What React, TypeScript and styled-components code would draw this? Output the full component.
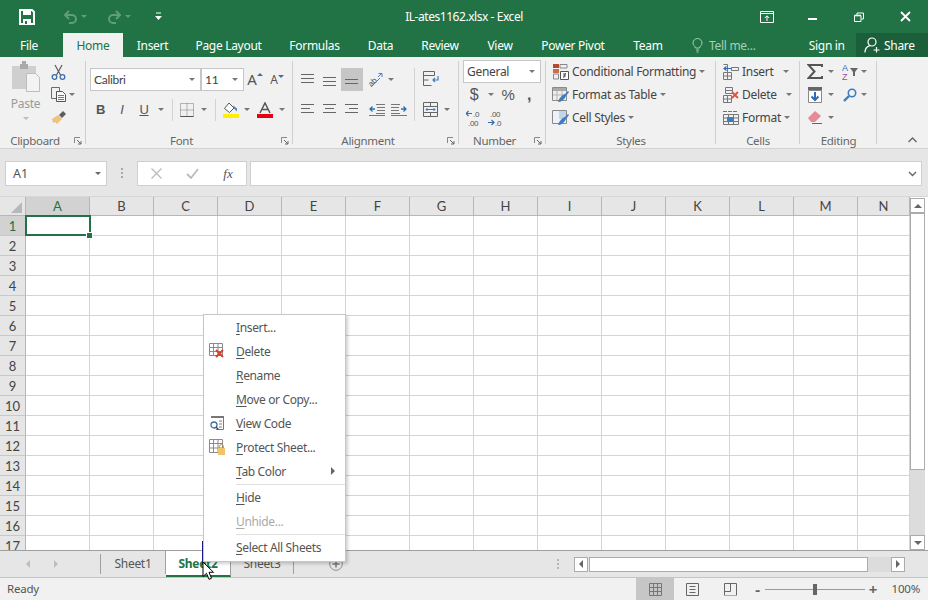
import React from "react";
import styled, { createGlobalStyle } from "styled-components";

const GREEN = "#217346";
const UI_FONT = `"Noto Sans", "Open Sans", sans-serif`;
const SHEET_FONT = `Lato, "Liberation Sans", sans-serif`;

const Global = createGlobalStyle`
  html, body { margin: 0; padding: 0; background: #fff; }
  * { box-sizing: border-box; }
  body { font-family: ${UI_FONT}; font-size: 12px; color: #444; overflow: hidden; }
`;

/* ---------- icons ---------- */
type IconProps = { w?: number; h?: number; children: React.ReactNode };
const Svg: React.FC<IconProps> = ({ w = 16, h = 16, children }) => (
  <svg width={w} height={h} viewBox={`0 0 ${w} ${h}`} fill="none" style={{ display: "block" }}>
    {children}
  </svg>
);

const SaveIcon = () => (
  <Svg w={16} h={16}>
    <path d="M1 1h12l2 2v12H1z" stroke="#fff" strokeWidth="2" />
    <path d="M4 1h8v5H4z" fill="#fff" />
    <path d="M4 10h8v5H4z" fill="#fff" />
    <path d="M6 12h2v3H6z" fill={GREEN} />
  </Svg>
);
const UndoIcon = ({ flip }: { flip?: boolean }) => (
  <svg width="15" height="14" viewBox="0 0 15 14" fill="none" style={{ display: "block", transform: flip ? "scaleX(-1)" : undefined }}>
    <path d="M6 1L2 5l4 4" stroke="#5f9d7c" strokeWidth="2" />
    <path d="M2 5h7a4 4 0 0 1 0 8H6" stroke="#5f9d7c" strokeWidth="2" />
  </svg>
);
const CustomizeIcon = () => (
  <Svg w={7} h={9}>
    <path d="M1 1h5" stroke="#fff" />
    <path d="M0 4h7L3.500 8z" fill="#fff" />
  </Svg>
);
const RibbonDisplayIcon = () => (
  <Svg w={14} h={12}>
    <path d="M.5 .5h13v11H.5z" stroke="#fff" />
    <path d="M1 2.500h12" stroke="#fff" />
    <path d="M7 10V5M4.800 7L7 4.800 9.200 7" stroke="#fff" />
  </Svg>
);
const MinimizeIcon = () => (
  <Svg w={10} h={10}>
    <path d="M0 7h9" stroke="#fff" strokeWidth="2" />
  </Svg>
);
const RestoreIcon = () => (
  <Svg w={10} h={10}>
    <path d="M.5 3.500h6.500v6H.5zM3 3V1h6.500v6H7.500" stroke="#fff" />
    <path d="M.5 3.500H7" stroke="#fff" strokeWidth="1.600" />
  </Svg>
);
const CloseIcon = () => (
  <Svg w={11} h={11}>
    <path d="M1 1l9 9M10 1l-9 9" stroke="#fff" strokeWidth="1.800" />
  </Svg>
);
const BulbIcon = () => (
  <Svg w={11} h={15}>
    <path d="M3.500 10C3 8 1 7.200 1 5a4.500 4.500 0 0 1 9 0c0 2.200-2 3-2.500 5z" stroke="#a5d0b7" />
    <path d="M4 12h3M4.500 14h2" stroke="#a5d0b7" />
  </Svg>
);
const PersonIcon = () => (
  <Svg w={16} h={16}>
    <circle cx="8" cy="5" r="4" stroke="#fff" strokeWidth="1.200" />
    <path d="M1 15.500c0-3.500 2-6 5-6.800M9.500 13h6M12.500 10v5.500" stroke="#fff" strokeWidth="1.200" />
  </Svg>
);
const PasteIcon = () => (
  <Svg w={30} h={32}>
    <path d="M1 5h24v23H1z" fill="#cfcfcf" />
    <path d="M9 3h8v5H9z" fill="#a9a9a9" />
    <path d="M11 0h4v3h-4z" fill="#a9a9a9" />
    <path d="M15.500 12.500h9l4 4v14h-13z" fill="#f3f3f3" stroke="#bdbdbd" />
  </Svg>
);
const ScissorsIcon = () => (
  <Svg w={15} h={16}>
    <path d="M4 1l5.500 10M11 1L5.500 11" stroke="#5c5c5c" strokeWidth="1.200" />
    <circle cx="3.500" cy="13" r="2.300" stroke="#3f6fa8" strokeWidth="1.300" />
    <circle cx="11.500" cy="13" r="2.300" stroke="#3f6fa8" strokeWidth="1.300" />
  </Svg>
);
const CopyIcon = () => (
  <Svg w={15} h={15}>
    <path d="M.5 .5h8v11h-8z" fill="#f1f1f1" stroke="#6a6a6a" />
    <path d="M5.500 4.500h6l3 3v7h-9z" fill="#f9f9f9" stroke="#555" />
    <path d="M7 8.500h6M7 10.500h6M7 12.500h6" stroke="#777" />
  </Svg>
);
const PainterIcon = () => (
  <Svg w={16} h={15}>
    <path d="M1 9l6-4 4 4-5 5-2-2-2 1z" fill="#efc27d" />
    <path d="M8 5l4-4 3 3-4 4z" fill="#5e5e5e" />
  </Svg>
);
const BorderIcon = () => (
  <Svg w={14} h={14}>
    <path d="M.5 .5h13v13H.5zM7 .5v13M.5 7h13" stroke="#777" strokeDasharray="1 1" />
    <path d="M.5 13.500h13" stroke="#555" />
  </Svg>
);
const FillIcon = () => (
  <Svg w={16} h={16}>
    <path d="M6 1L1.500 6.500 6.500 10.500 11 6z" stroke="#555" fill="#fff" />
    <path d="M10 3.500l4 3v3l-3-3z" fill="#4e7fb5" />
    <path d="M0 12h16v4H0z" fill="#ffee00" />
  </Svg>
);
const FontColorIcon = () => (
  <Svg w={16} h={16}>
    <path d="M3 11L8 1l5 10M5 7.500h6" stroke="#555" strokeWidth="1.500" />
    <path d="M0 12h16v4H0z" fill="#e8000d" />
  </Svg>
);
const AlignLines = ({ y = 0, widths = [13, 13, 13], x = [0, 0, 0] }: { y?: number; widths?: number[]; x?: number[] }) => (
  <Svg w={14} h={14}>
    {widths.map((wd, i) => (
      <path key={i} d={`M${x[i]} ${y + 1.5 + i * 4}h${wd}`} stroke="#666" />
    ))}
  </Svg>
);
const OrientIcon = () => (
  <svg width="18" height="18" viewBox="0 0 18 18" fill="none" style={{ display: "block" }}>
    <text x="2" y="14" fontSize="8" fill="#555" fontFamily="Liberation Sans" transform="rotate(-45 6 11)">ab</text>
    <path d="M5 16L14 7" stroke="#777" />
    <path d="M12 6l3-3M12.500 2.500H16V6" stroke="#4e7fb5" />
  </svg>
);
const IndentIcon = ({ flip }: { flip?: boolean }) => (
  <svg width="16" height="13" viewBox="0 0 16 13" fill="none" style={{ display: "block", transform: flip ? "scaleX(-1)" : undefined }}>
    <path d="M7 1.500h9M8 4.500h8M8 7.500h8M7 10.500h9M0 12.500h16" stroke="#777" />
    <path d="M1 6h5M3.500 3.500L1 6l2.500 2.500" stroke="#2f6db0" strokeWidth="1.300" />
  </svg>
);
const WrapIcon = () => (
  <Svg w={16} h={15}>
    <path d="M.5 .5h11v4h-11zM.5 4.500h9M.5 9h5M.5 4.500v10h8" stroke="#666" />
    <path d="M15 5v4H10M12 7l-2 2 2 2" stroke="#3f7cbf" strokeWidth="1.200" />
  </Svg>
);
const MergeIcon = () => (
  <Svg w={15} h={15}>
    <path d="M.5 .5h14v14H.5zM.5 4.500h14M.5 10.500h14M7.500 .5v4M7.500 10.500v4" stroke="#666" />
    <path d="M3 7.500h9M4.500 6L3 7.500 4.500 9M10.500 6L12 7.500 10.500 9" stroke="#3f7cbf" />
  </Svg>
);
const DecIcon = ({ more }: { more?: boolean }) => (
  <Svg w={16} h={16}>
    <path d={more ? "M0 12.500h6M3.500 10l2.500 2.500L3.500 15" : "M0 3.500h6M2.500 1L0 3.500 2.500 6"} stroke="#2f6db0" strokeWidth="1.200" />
    <text x={more ? 2 : 7} y="7" fontSize="8" fill="#555" fontFamily="Liberation Sans">{more ? ".00" : ".0"}</text>
    <text x={more ? 7 : 2} y="15.500" fontSize="8" fill="#555" fontFamily="Liberation Sans">{more ? ".0" : ".00"}</text>
  </Svg>
);
const CondIcon = () => (
  <Svg w={16} h={16}>
    <path d="M0 0h6v4H0z" fill="#b5492f" />
    <path d="M7 .5h7v3.500H7z" stroke="#888" />
    <path d="M0 5h6v4H0z" fill="#c96d4f" />
    <path d="M.5 10h5v5h-5z" stroke="#888" />
    <path d="M7.500 7.500h8v8h-8z" fill="#fff" stroke="#555" />
    <path d="M10 10h3M10 12h3M12.500 9l-2 5" stroke="#333" strokeWidth=".8" />
  </Svg>
);
const TableIcon = () => (
  <Svg w={17} h={16}>
    <path d="M.5 .5h14v13H.5z" fill="#eee" stroke="#8a8a8a" />
    <path d="M1 1h13v3H1z" fill="#a9a9a9" />
    <path d="M5 4v9M10 4v9M1 8h13" stroke="#b5b5b5" />
    <path d="M6 15c1-4 4-7 7-8l3-3 1 1-3 4c-2 4-5 6-8 6z" fill="#3f7cbf" />
  </Svg>
);
const CellStyleIcon = () => (
  <Svg w={17} h={16}>
    <path d="M.5 .5h14v13H.5z" fill="#eef2f6" stroke="#8a8a8a" />
    <path d="M7 1h7v8H7z" fill="#c4d5e6" />
    <path d="M6 15c1-4 4-7 7-8l3-3 1 1-3 4c-2 4-5 6-8 6z" fill="#3f7cbf" />
  </Svg>
);
const InsertCellsIcon = () => (
  <Svg w={16} h={16}>
    <path d="M.5 8.500h8v7h-8zM4.500 8.500v7M.5 12h8M.5 .5h4v8M8.500 3.500h7v3h-7z" stroke="#777" />
    <path d="M1 4.500h7M3.500 2.500L1 4.500l2.500 2" stroke="#2f6db0" strokeWidth="1.200" />
  </Svg>
);
const DeleteCellsIcon = () => (
  <Svg w={16} h={16}>
    <path d="M.5 8.500h8v7h-8zM4.500 8.500v7M.5 12h8M2.500 .5h7v3h-7zM2.500 3.500h7v3h-7z" stroke="#777" />
    <path d="M9 5l6 6M15 5l-6 6" stroke="#d8553e" strokeWidth="1.800" />
  </Svg>
);
const FormatCellsIcon = () => (
  <Svg w={16} h={16}>
    <path d="M.5 4.500h15v10H.5zM5.500 4.500v10M10.500 4.500v10M.5 8h15M.5 11.500h15" stroke="#777" />
    <path d="M0 1.500h15" stroke="#3f7cbf" strokeDasharray="4 1" />
    <path d="M4 7h6v5H4z" fill="#3f7cbf" />
  </Svg>
);
const SigmaIcon = () => (
  <Svg w={16} h={15}>
    <path d="M15 3V1H1.500l6 6.500-6 6.500H15v-2" stroke="#555" strokeWidth="2" />
  </Svg>
);
const FillDownIcon = () => (
  <Svg w={14} h={16}>
    <path d="M0 0h14v3H0z" fill="#666" />
    <path d="M.5 3.500h13v12H.5z" stroke="#888" fill="#fff" />
    <path d="M7 5v8M3.500 9.500L7 13l3.500-3.500" stroke="#2f6db0" strokeWidth="2" />
  </Svg>
);
const SortIcon = () => (
  <Svg w={16} h={17}>
    <text x="0" y="8" fontSize="9" fill="#2f6db0" fontFamily="Liberation Sans">A</text>
    <text x="0" y="16.500" fontSize="9" fill="#a04ea8" fontFamily="Liberation Sans">Z</text>
    <path d="M8 5h8l-3 4v4h-2V9z" fill="#666" />
  </Svg>
);
const FindIcon = () => (
  <Svg w={14} h={14}>
    <circle cx="9" cy="5" r="3.700" stroke="#3f7cbf" strokeWidth="1.600" />
    <path d="M6 8l-5 5" stroke="#3f7cbf" strokeWidth="2.400" />
  </Svg>
);
const EraserIcon = () => (
  <Svg w={15} h={13}>
    <path d="M0 7l7-7 6 5-6 6H3z" fill="#e58a96" />
    <path d="M4 12.500h10" stroke="#666" />
  </Svg>
);
const LauncherIcon = () => (
  <Svg w={8} h={8}>
    <path d="M.5 6V.5H6" stroke="#888" />
    <path d="M3 3l4 4M7 4v3H4" stroke="#666" />
  </Svg>
);
const CollapseIcon = () => (
  <Svg w={9} h={6}>
    <path d="M.5 5l4-4 4 4" stroke="#666" strokeWidth="1.400" />
  </Svg>
);
const CrossIcon = () => (
  <Svg w={11} h={11}>
    <path d="M.5 .5l10 10M10.500 .5l-10 10" stroke="#bbb" strokeWidth="1.300" />
  </Svg>
);
const CheckIcon = () => (
  <Svg w={13} h={11}>
    <path d="M1 6l4 4 7-9" stroke="#bbb" strokeWidth="1.800" />
  </Svg>
);
const ChevronIcon = () => (
  <Svg w={9} h={6}>
    <path d="M1 1l3.500 3.500L8 1" stroke="#666" strokeWidth="1.400" />
  </Svg>
);
const ViewCodeIcon = () => (
  <Svg w={16} h={16}>
    <path d="M2.500 1.500h12v13H7" stroke="#777" />
    <path d="M2 1h13v2H2z" fill="#777" />
    <circle cx="5" cy="10" r="3" stroke="#3f6f9f" strokeWidth="1.300" />
    <path d="M7 12l2.500 2.500" stroke="#444" strokeWidth="1.300" />
    <path d="M10 6h3M10 9h3M10 12h3" stroke="#777" />
  </Svg>
);
const ProtectIcon = () => (
  <Svg w={16} h={16}>
    <path d="M.5 .5h13v13H.5zM.5 4.500h13M.5 9h13M4.500 .5v13M9 .5v13" stroke="#8a8a8a" />
    <path d="M9 9h7v7H9z" fill="#f0c36d" />
    <path d="M10.500 9V7.500a2 2 0 0 1 4 0V9" stroke="#c89b3c" />
  </Svg>
);
const DeleteSheetIcon = () => (
  <Svg w={16} h={16}>
    <path d="M.5 .5h13v12H.5zM.5 4.500h13M.5 8.500h13M4.500 .5v12M9 .5v12" stroke="#8a8a8a" />
    <path d="M7 7l7 7M14 7l-7 7" stroke="#d8412a" strokeWidth="2" />
  </Svg>
);
const NormalViewIcon = () => (
  <Svg w={13} h={13}>
    <path d="M.5 .5h12v12H.5zM4.500 .5v12M8.500 .5v12M.5 4.500h12M.5 8.500h12" stroke="#777" />
  </Svg>
);
const PageLayoutIcon = () => (
  <Svg w={13} h={13}>
    <path d="M.5 .5h12v12H.5z" stroke="#666" />
    <path d="M3.500 3.500h6M3.500 6.500h6M3.500 9.500h6" stroke="#666" />
  </Svg>
);
const PageBreakIcon = () => (
  <Svg w={13} h={13}>
    <path d="M.5 .5h12v12M.5 .5v12M.5 8.500h6v-8" stroke="#666" />
    <path d="M.5 12.500h12" stroke="#aaa" />
  </Svg>
);
const PlusCircleIcon = () => (
  <Svg w={14} h={14}>
    <circle cx="7" cy="7" r="6.300" stroke="#8a8a8a" />
    <path d="M3.500 7h7M7 3.500v7" stroke="#777" strokeWidth="1.500" />
  </Svg>
);
const PointerIcon = () => (
  <Svg w={14} h={20}>
    <path d="M1 1v14.500l3.500-3.200 2.500 6 2.500-1-2.500-6h4.500z" fill="#fff" stroke="#000" />
  </Svg>
);

/* ---------- shared bits ---------- */
const Caret = styled.span<{ $color?: string }>`
  display: block;
  width: 0;
  height: 0;
  border-left: 3px solid transparent;
  border-right: 3px solid transparent;
  border-top: 3px solid ${(p) => p.$color || "#777"};
`;
const Slot = styled.div<{ $w: number; $h?: number; $active?: boolean }>`
  width: ${(p) => p.$w}px;
  height: ${(p) => p.$h || 23}px;
  flex: none;
  display: flex;
  align-items: center;
  justify-content: center;
  background: ${(p) => (p.$active ? "#c6c6c6" : "transparent")};
`;

/* ---------- title bar ---------- */
const TitleBar = styled.header`
  height: 33px;
  background: ${GREEN};
  display: grid;
  grid-template-columns: 1fr auto 1fr;
  align-items: center;
  color: #fff;
`;
const Qat = styled.div`
  display: flex;
  align-items: center;
  padding-left: 19px;
  height: 30px;
`;
const Title = styled.div`
  font-size: 12px;
  letter-spacing: -0.45px;
`;
const WindowControls = styled.div`
  display: flex;
  justify-content: flex-end;
  height: 30px;
`;

/* ---------- tabs ---------- */
const TabRow = styled.nav`
  height: 24px;
  background: ${GREEN};
  display: flex;
  color: #fff;
  font-size: 12px;
  letter-spacing: -0.3px;
`;
const Tab = styled.div<{ $w: number; $active?: boolean }>`
  width: ${(p) => p.$w}px;
  flex: none;
  display: flex;
  align-items: center;
  justify-content: center;
  background: ${(p) => (p.$active ? "#f1f1f1" : "transparent")};
  color: ${(p) => (p.$active ? GREEN : "#fff")};
`;
const TellMe = styled.div`
  width: 116px;
  margin-left: 15px;
  display: flex;
  align-items: center;
  gap: 6px;
  color: #a5d0b7;
`;
const SignIn = styled.div`
  margin-left: auto;
  width: 46px;
  display: flex;
  align-items: center;
  justify-content: center;
  margin-right: 7px;
`;
const Share = styled.div`
  width: 74px;
  background: #1b5e3a;
  display: flex;
  align-items: center;
  padding-left: 8px;
  gap: 4px;
`;

/* ---------- ribbon ---------- */
const Ribbon = styled.section`
  height: 92px;
  background: #f1f1f1;
  border-bottom: 1px solid #d2d2d2;
  display: flex;
  font-size: 12px;
  letter-spacing: -0.3px;
`;
const Group = styled.div<{ $w: number }>`
  width: ${(p) => p.$w}px;
  flex: none;
  position: relative;
  display: flex;
  flex-direction: column;
  &::after {
    content: "";
    position: absolute;
    right: 0;
    top: 4px;
    bottom: 4px;
    width: 1px;
    background: #cfcfcf;
  }
`;
const GroupBody = styled.div<{ $top?: number; $left?: number; $gap?: number; $row?: boolean }>`
  height: 75px;
  flex: none;
  padding-top: ${(p) => p.$top ?? 3}px;
  padding-left: ${(p) => p.$left ?? 0}px;
  display: flex;
  flex-direction: ${(p) => (p.$row ? "row" : "column")};
  gap: ${(p) => p.$gap ?? 0}px;
`;
const GroupLabel = styled.div`
  height: 16px;
  display: flex;
  align-items: center;
  color: #666;
  font-size: 11.500px;
  padding-top: 1px;
`;
const LabelText = styled.div`
  flex: 1;
  text-align: center;
`;
const Launcher = styled.div`
  width: 16px;
  display: flex;
  justify-content: center;
  padding-right: 1px;
`;
const Row = styled.div<{ $h?: number }>`
  display: flex;
  align-items: center;
  height: ${(p) => p.$h || 23}px;
`;
const Column = styled.div<{ $w?: number }>`
  display: flex;
  flex-direction: column;
  ${(p) => (p.$w ? `width: ${p.$w}px;` : "")}
`;
const PasteButton = styled.div`
  width: 47px;
  margin-left: 2px;
  display: flex;
  flex-direction: column;
  align-items: center;
  padding-top: 1px;
  color: #9a9a9a;
`;
const PasteLabel = styled.div`
  margin-top: 3px;
  line-height: 16px;
`;
const PasteCaret = styled.div`
  margin-top: 5px;
`;
const Select = styled.div<{ $w: number; $h?: number; $font?: string }>`
  width: ${(p) => p.$w}px;
  height: ${(p) => p.$h || 23}px;
  flex: none;
  background: #fff;
  border: 1px solid #c6c6c6;
  display: flex;
  align-items: center;
  justify-content: space-between;
  padding: 0 5px 0 3px;
  font-family: ${(p) => p.$font || UI_FONT};
  color: #444;
`;
const StyleLetter = styled.span<{ $b?: boolean; $i?: boolean; $u?: boolean }>`
  font-family: "Liberation Sans", sans-serif;
  font-size: 13px;
  font-weight: ${(p) => (p.$b ? 700 : 400)};
  font-style: ${(p) => (p.$i ? "italic" : "normal")};
  text-decoration: ${(p) => (p.$u ? "underline" : "none")};
  color: #555;
`;
const GrowA = styled.span<{ $size: number }>`
  display: flex;
  align-items: flex-start;
  font-size: ${(p) => p.$size}px;
  line-height: 1;
  color: #555;
`;
const Arrow = styled.span<{ $down?: boolean }>`
  display: block;
  width: 0;
  height: 0;
  margin-top: 1px;
  border-left: 3px solid transparent;
  border-right: 3px solid transparent;
  border-bottom: ${(p) => (p.$down ? "0" : "3px solid #3f6f9f")};
  border-top: ${(p) => (p.$down ? "3px solid #3f6f9f" : "0")};
`;
const VSep = styled.div<{ $l: number; $r: number; $h?: number }>`
  width: 1px;
  height: ${(p) => p.$h || 22}px;
  flex: none;
  margin: 0 ${(p) => p.$r}px 0 ${(p) => p.$l}px;
  background: #d2d2d2;
`;
const NumberGlyph = styled.span<{ $size: number; $b?: boolean }>`
  font-size: ${(p) => p.$size}px;
  font-weight: ${(p) => (p.$b ? 700 : 400)};
  color: #555;
  font-family: "Liberation Sans", sans-serif;
`;
const StyleRow = styled.div<{ $w: number }>`
  height: 23px;
  width: ${(p) => p.$w}px;
  display: flex;
  align-items: center;
  gap: 3px;
`;
const IconBox = styled.div`
  width: 17px;
  flex: none;
  display: flex;
  justify-content: center;
`;
const RowCaret = styled.div<{ $gap: number }>`
  margin-left: ${(p) => p.$gap}px;
`;
const CollapseArea = styled.div`
  flex: 1;
  display: flex;
  align-items: flex-end;
  justify-content: flex-end;
  padding: 0 11px 5px 0;
`;

/* ---------- formula bar ---------- */
const FormulaBar = styled.section`
  height: 48px;
  background: #e6e6e6;
  display: flex;
  align-items: flex-start;
  padding: 12px 6px 0 5px;
  border-bottom: 1px solid #d6d6d6;
`;
const NameBox = styled.div`
  width: 102px;
  height: 25px;
  background: #fff;
  border: 1px solid #cfcfcf;
  display: flex;
  align-items: center;
  justify-content: space-between;
  padding: 0 5px 0 7px;
  font-size: 12.500px;
  color: #555;
`;
const GripDots = styled.div`
  width: 30px;
  height: 25px;
  display: flex;
  align-items: center;
  justify-content: center;
`;
const Grip = styled.div`
  width: 2px;
  height: 11px;
  background: repeating-linear-gradient(#a8a8a8 0 2px, transparent 2px 4px);
`;
const FxBox = styled.div`
  width: 110px;
  height: 25px;
  background: #fff;
  border: 1px solid #cfcfcf;
  display: grid;
  grid-template-columns: 36px 36px 36px;
  align-items: center;
  justify-items: center;
`;
const FxText = styled.span`
  font-family: "Liberation Serif", serif;
  font-style: italic;
  font-size: 13px;
  color: #555;
`;
const FormulaInput = styled.div`
  flex: 1;
  height: 25px;
  margin-left: 3px;
  background: #fff;
  border: 1px solid #cfcfcf;
  display: flex;
  align-items: center;
  justify-content: flex-end;
  padding-right: 4px;
`;

/* ---------- sheet ---------- */
const SheetArea = styled.section`
  height: 353px;
  display: flex;
  overflow: hidden;
  background: #fff;
`;
const Grid = styled.div`
  flex: 1;
  min-width: 0;
  overflow: hidden;
  font-family: ${SHEET_FONT};
  font-size: 13px;
`;
const HeaderRow = styled.div`
  display: flex;
  height: 19px;
`;
const Corner = styled.div`
  width: 26px;
  flex: none;
  background: #e6e6e6;
  border-right: 1px solid #b6b6b6;
  border-bottom: 1px solid #b6b6b6;
  display: flex;
  justify-content: flex-end;
  align-items: flex-end;
  padding: 0 3px 2px 0;
`;
const CornerTriangle = styled.div`
  width: 0;
  height: 0;
  border-left: 11px solid transparent;
  border-bottom: 11px solid #b8b8b8;
`;
const ColHead = styled.div<{ $w: number; $sel?: boolean }>`
  width: ${(p) => p.$w}px;
  flex: none;
  display: flex;
  align-items: center;
  justify-content: center;
  background: ${(p) => (p.$sel ? "#d2d2d2" : "#e6e6e6")};
  color: ${(p) => (p.$sel ? GREEN : "#444")};
  border-right: 1px solid #b6b6b6;
  border-bottom: 1px solid ${(p) => (p.$sel ? GREEN : "#b6b6b6")};
`;
const DataRow = styled.div`
  display: flex;
  height: 20px;
`;
const RowHead = styled.div<{ $sel?: boolean }>`
  width: 26px;
  flex: none;
  display: flex;
  align-items: center;
  justify-content: center;
  background: ${(p) => (p.$sel ? "#d2d2d2" : "#e6e6e6")};
  color: ${(p) => (p.$sel ? GREEN : "#444")};
  border-right: 1px solid #b6b6b6;
  border-bottom: 1px solid #c8c8c8;
`;
const Cell = styled.div<{ $w: number; $active?: boolean }>`
  width: ${(p) => p.$w}px;
  flex: none;
  position: relative;
  border-right: 1px solid #d4d4d4;
  border-bottom: 1px solid #d4d4d4;
  ${(p) =>
    p.$active &&
    `
    &::after {
      content: "";
      box-sizing: border-box;
      position: absolute;
      left: -1px;
      top: -1px;
      width: 66px;
      height: 21px;
      border: 2px solid ${GREEN};
    }
    &::before {
      content: "";
      position: absolute;
      z-index: 1;
      left: 60px;
      top: 16px;
      width: 5px;
      height: 5px;
      background: ${GREEN};
      border: 1px solid #fff;
      box-sizing: content-box;
    }
  `}
`;
const VScroll = styled.div`
  width: 18px;
  flex: none;
  background: #fff;
  padding: 1px 3px 0 0;
  display: flex;
  flex-direction: column;
`;
const ScrollButton = styled.div`
  width: 15px;
  height: 15px;
  flex: none;
  background: #fff;
  border: 1px solid #ababab;
  display: flex;
  align-items: center;
  justify-content: center;
`;
const ArrowUp = styled.span`
  display: block;
  width: 0;
  height: 0;
  border-left: 4px solid transparent;
  border-right: 4px solid transparent;
  border-bottom: 4px solid #666;
`;
const ArrowDown = styled(ArrowUp)`
  border-bottom: 0;
  border-top: 4px solid #666;
`;
const VTrack = styled.div`
  flex: 1;
  background: #dcdcdc;
`;
const VThumb = styled.div`
  height: 257px;
  background: #fff;
  border: 1px solid #ababab;
`;

/* ---------- tab strip ---------- */
const TabStrip = styled.section`
  height: 28px;
  background: #e6e6e6;
  border-top: 1px solid #9f9f9f;
  border-bottom: 1px solid #c4c4c4;
  display: flex;
  align-items: stretch;
  font-size: 12px;
`;
const NavArrows = styled.div`
  width: 101px;
  flex: none;
  display: flex;
  align-items: center;
  padding-left: 26px;
  gap: 24px;
  border-right: 1px solid #9f9f9f;
  margin: 3px 0;
`;
const ArrowLeft = styled.span<{ $color?: string; $size?: number }>`
  display: block;
  width: 0;
  height: 0;
  border-top: ${(p) => p.$size || 4}px solid transparent;
  border-bottom: ${(p) => p.$size || 4}px solid transparent;
  border-right: ${(p) => p.$size || 4}px solid ${(p) => p.$color || "#bdbdbd"};
`;
const ArrowRight = styled.span<{ $color?: string; $size?: number }>`
  display: block;
  width: 0;
  height: 0;
  border-top: ${(p) => p.$size || 4}px solid transparent;
  border-bottom: ${(p) => p.$size || 4}px solid transparent;
  border-left: ${(p) => p.$size || 4}px solid ${(p) => p.$color || "#bdbdbd"};
`;
const SheetTab = styled.div<{ $w: number; $active?: boolean }>`
  width: ${(p) => p.$w}px;
  flex: none;
  display: flex;
  align-items: center;
  justify-content: center;
  letter-spacing: -0.3px;
  padding-top: ${(p) => (p.$active ? "0" : "2px")};
  color: ${(p) => (p.$active ? GREEN : "#555")};
  font-weight: ${(p) => (p.$active ? 700 : 400)};
  background: ${(p) => (p.$active ? "#fff" : "transparent")};
  border-right: 1px solid #9f9f9f;
  border-bottom: ${(p) => (p.$active ? `2px solid ${GREEN}` : "0")};
  margin-bottom: ${(p) => (p.$active ? "0" : "3px")};
`;
const AddSheet = styled.div`
  width: 84px;
  flex: none;
  display: flex;
  align-items: center;
  padding-left: 35px;
`;
const TabGrip = styled.div`
  width: 2px;
  height: 11px;
  margin: auto 0 auto 179px;
  background: repeating-linear-gradient(#b4b4b4 0 2px, transparent 2px 4px);
`;
const HScroll = styled.div`
  display: flex;
  align-items: center;
  margin-left: 15px;
  width: 331px;
`;
const HButton = styled.div`
  width: 14px;
  height: 15px;
  flex: none;
  background: #fff;
  border: 1px solid #ababab;
  display: flex;
  align-items: center;
  justify-content: center;
`;
const HThumb = styled.div`
  width: 279px;
  height: 15px;
  margin-left: 1px;
  flex: none;
  background: #fff;
  border: 1px solid #ababab;
`;
const HTrack = styled.div`
  flex: 1;
  height: 15px;
  background: #dcdcdc;
`;

/* ---------- status bar ---------- */
const StatusBar = styled.footer`
  height: 22px;
  background: #f1f1f1;
  display: flex;
  align-items: center;
  padding-left: 7px;
  font-size: 11.500px;
  letter-spacing: -0.2px;
  color: #555;
`;
const StatusText = styled.div`
  flex: 1;
  padding-bottom: 2px;
`;
const ViewButton = styled.div<{ $active?: boolean; $w: number }>`
  width: ${(p) => p.$w}px;
  height: 22px;
  flex: none;
  display: flex;
  align-items: center;
  justify-content: center;
  background: ${(p) => (p.$active ? "#c6c6c6" : "transparent")};
`;
const ZoomSign = styled.div<{ $w: number }>`
  width: ${(p) => p.$w}px;
  flex: none;
  text-align: center;
  font-size: 15px;
  line-height: 22px;
  font-weight: 700;
  color: #666;
`;
const ZoomTrack = styled.div`
  width: 100px;
  height: 1px;
  flex: none;
  background: #9a9a9a;
  display: flex;
  justify-content: center;
  align-items: center;
`;
const ZoomThumb = styled.div`
  width: 4px;
  height: 11px;
  flex: none;
  background: #666;
`;
const ZoomValue = styled.div`
  width: 47px;
  text-align: right;
  padding-right: 8px;
  padding-bottom: 2px;
  flex: none;
`;

/* ---------- context menu ---------- */
const Menu = styled.div`
  position: absolute;
  left: 203px;
  top: 314px;
  width: 143px;
  height: 248px;
  background: #fff;
  border: 1px solid #c6c6c6;
  box-shadow: 2px 2px 3px rgba(0, 0, 0, 0.18);
  font-size: 12px;
  letter-spacing: -0.35px;
  z-index: 5;
`;
const MenuItem = styled.div<{ $disabled?: boolean }>`
  height: 24px;
  display: flex;
  align-items: center;
  color: ${(p) => (p.$disabled ? "#aaa" : "#555")};
  u {
    text-underline-offset: 2px;
  }
`;
const MenuIcon = styled.div`
  width: 32px;
  flex: none;
  display: flex;
  justify-content: center;
  padding-right: 6px;
`;
const MenuSubArrow = styled.div`
  margin-left: auto;
  margin-right: 10px;
`;
const MenuSep = styled.div<{ $h: number }>`
  height: ${(p) => p.$h}px;
  margin-left: 32px;
  display: flex;
  align-items: center;
  &::after {
    content: "";
    width: 100%;
    height: 1px;
    background: #e0e0e0;
  }
`;
const DropLine = styled.div`
  position: absolute;
  left: 202px;
  top: 541px;
  width: 1px;
  height: 23px;
  background: #1a1a8c;
  z-index: 6;
`;
const Pointer = styled.div`
  position: absolute;
  left: 202px;
  top: 561px;
  z-index: 7;
`;
const Page = styled.div`
  position: relative;
  width: 928px;
  height: 600px;
  overflow: hidden;
`;

const colNames = "ABCDEFGHIJKLMN".split("");
const colWidth = (i: number) => (i === 13 ? 52 : 64);
const rows = Array.from({ length: 17 }, (_, i) => i + 1);

const tabs: [string, number][] = [
  ["Insert", 59],
  ["Page Layout", 93],
  ["Formulas", 79],
  ["Data", 53],
  ["Review", 66],
  ["View", 54],
  ["Power Pivot", 92],
  ["Team", 58],
];

export default function App() {
  return (
    <Page>
      <Global />
      <TitleBar>
        <Qat>
          <SaveIcon />
          <Slot $w={28} $h={30} />
          <UndoIcon />
          <Slot $w={11} $h={30}><Caret $color="#5f9d7c" /></Slot>
          <Slot $w={18} $h={30} />
          <UndoIcon flip />
          <Slot $w={11} $h={30}><Caret $color="#5f9d7c" /></Slot>
          <Slot $w={22} $h={30} />
          <CustomizeIcon />
        </Qat>
        <Title>IL-ates1162.xlsx - Excel</Title>
        <WindowControls>
          <Slot $w={46} $h={30}><RibbonDisplayIcon /></Slot>
          <Slot $w={46} $h={30}><MinimizeIcon /></Slot>
          <Slot $w={46} $h={30}><RestoreIcon /></Slot>
          <Slot $w={46} $h={30}><CloseIcon /></Slot>
        </WindowControls>
      </TitleBar>

      <TabRow>
        <Tab $w={58}>File</Tab>
        <Slot $w={5} $h={24} />
        <Tab $w={60} $active>Home</Tab>
        {tabs.map(([name, w]) => (
          <Tab key={name} $w={w}>{name}</Tab>
        ))}
        <TellMe><BulbIcon />Tell me...</TellMe>
        <SignIn>Sign in</SignIn>
        <Share><PersonIcon />Share</Share>
      </TabRow>

      <Ribbon>
        <Group $w={86}>
          <GroupBody $row>
            <PasteButton>
              <PasteIcon />
              <PasteLabel>Paste</PasteLabel>
              <PasteCaret><Caret $color="#bbb" /></PasteCaret>
            </PasteButton>
            <Column>
              <Slot $w={19}><ScissorsIcon /></Slot>
              <Row>
                <Slot $w={19}><CopyIcon /></Slot>
                <Slot $w={8}><Caret /></Slot>
              </Row>
              <Slot $w={19}><PainterIcon /></Slot>
            </Column>
          </GroupBody>
          <GroupLabel>
            <LabelText>Clipboard</LabelText>
            <Launcher><LauncherIcon /></Launcher>
          </GroupLabel>
        </Group>

        <Group $w={207}>
          <GroupBody $top={11} $left={4} $gap={7}>
            <Row>
              <Select $w={111} $font={SHEET_FONT}>Calibri<Caret /></Select>
              <Select $w={43} $font={SHEET_FONT}>11<Caret /></Select>
              <Slot $w={22}><GrowA $size={15}>A<Arrow /></GrowA></Slot>
              <Slot $w={22}><GrowA $size={12}>A<Arrow $down /></GrowA></Slot>
            </Row>
            <Row>
              <Slot $w={21}><StyleLetter $b>B</StyleLetter></Slot>
              <Slot $w={22}><StyleLetter $i>I</StyleLetter></Slot>
              <Slot $w={22}><StyleLetter $u>U</StyleLetter></Slot>
              <Slot $w={12}><Caret /></Slot>
              <VSep $l={5} $r={5} />
              <Slot $w={18}><BorderIcon /></Slot>
              <Slot $w={16}><Caret /></Slot>
              <VSep $l={3} $r={3} />
              <Slot $w={24}><FillIcon /></Slot>
              <Slot $w={8}><Caret /></Slot>
              <Slot $w={28}><FontColorIcon /></Slot>
              <Slot $w={5}><Caret /></Slot>
            </Row>
          </GroupBody>
          <GroupLabel>
            <LabelText>Font</LabelText>
            <Launcher><LauncherIcon /></Launcher>
          </GroupLabel>
        </Group>

        <Group $w={166}>
          <GroupBody $top={11} $left={4} $row>
            <Column $w={117}>
              <Row>
                <Slot $w={22}><AlignLines y={0} /></Slot>
                <Slot $w={22}><AlignLines y={3} /></Slot>
                <Slot $w={22} $active><AlignLines y={5} widths={[13, 13, 0]} /></Slot>
                <Slot $w={24}><OrientIcon /></Slot>
                <Slot $w={8}><Caret /></Slot>
              </Row>
              <Row $h={7} />
              <Row>
                <Slot $w={22}><AlignLines widths={[13, 9, 13]} /></Slot>
                <Slot $w={22}><AlignLines widths={[13, 9, 13]} x={[0, 2, 0]} /></Slot>
                <Slot $w={22}><AlignLines widths={[13, 9, 13]} x={[0, 4, 0]} /></Slot>
                <Slot $w={28}><IndentIcon /></Slot>
                <Slot $w={16}><IndentIcon flip /></Slot>
              </Row>
            </Column>
            <VSep $l={0} $r={0} $h={53} />
            <Column>
              <Slot $w={31} $h={21}><WrapIcon /></Slot>
              <Row $h={9} />
              <Row>
                <Slot $w={31}><MergeIcon /></Slot>
                <Slot $w={2}><Caret /></Slot>
              </Row>
            </Column>
          </GroupBody>
          <GroupLabel>
            <LabelText>Alignment</LabelText>
            <Launcher><LauncherIcon /></Launcher>
          </GroupLabel>
        </Group>

        <Group $w={87}>
          <GroupBody $left={4}>
            <Select $w={78} $h={23}>General<Caret /></Select>
            <Row>
              <Slot $w={22}><NumberGlyph $size={16}>$</NumberGlyph></Slot>
              <Slot $w={12}><Caret /></Slot>
              <Slot $w={22}><NumberGlyph $size={15}>%</NumberGlyph></Slot>
              <Slot $w={20}><NumberGlyph $size={16} $b>,</NumberGlyph></Slot>
            </Row>
            <Row>
              <Slot $w={22}><DecIcon /></Slot>
              <Slot $w={22}><DecIcon more /></Slot>
            </Row>
          </GroupBody>
          <GroupLabel>
            <LabelText>Number</LabelText>
            <Launcher><LauncherIcon /></Launcher>
          </GroupLabel>
        </Group>

        <Group $w={170}>
          <GroupBody $left={6}>
            <StyleRow $w={160}>
              <IconBox><CondIcon /></IconBox>Conditional Formatting<RowCaret $gap={0}><Caret /></RowCaret>
            </StyleRow>
            <StyleRow $w={160}>
              <IconBox><TableIcon /></IconBox>Format as Table<RowCaret $gap={0}><Caret /></RowCaret>
            </StyleRow>
            <StyleRow $w={160}>
              <IconBox><CellStyleIcon /></IconBox>Cell Styles<RowCaret $gap={0}><Caret /></RowCaret>
            </StyleRow>
          </GroupBody>
          <GroupLabel>
            <LabelText>Styles</LabelText>
          </GroupLabel>
        </Group>

        <Group $w={84}>
          <GroupBody $left={6}>
            <StyleRow $w={74}>
              <IconBox><InsertCellsIcon /></IconBox>Insert<RowCaret $gap={6}><Caret /></RowCaret>
            </StyleRow>
            <StyleRow $w={74}>
              <IconBox><DeleteCellsIcon /></IconBox>Delete<RowCaret $gap={6}><Caret /></RowCaret>
            </StyleRow>
            <StyleRow $w={74}>
              <IconBox><FormatCellsIcon /></IconBox>Format<RowCaret $gap={0}><Caret /></RowCaret>
            </StyleRow>
          </GroupBody>
          <GroupLabel>
            <LabelText>Cells</LabelText>
          </GroupLabel>
        </Group>

        <Group $w={77}>
          <GroupBody $left={6}>
            <Row>
              <Slot $w={18}><SigmaIcon /></Slot>
              <Slot $w={14}><Caret /></Slot>
              <Slot $w={24}><SortIcon /></Slot>
              <Slot $w={4}><Caret /></Slot>
            </Row>
            <Row>
              <Slot $w={18}><FillDownIcon /></Slot>
              <Slot $w={14}><Caret /></Slot>
              <Slot $w={24}><FindIcon /></Slot>
              <Slot $w={4}><Caret /></Slot>
            </Row>
            <Row>
              <Slot $w={18}><EraserIcon /></Slot>
              <Slot $w={14}><Caret /></Slot>
            </Row>
          </GroupBody>
          <GroupLabel>
            <LabelText>Editing</LabelText>
          </GroupLabel>
        </Group>
        <CollapseArea><CollapseIcon /></CollapseArea>
      </Ribbon>

      <FormulaBar>
        <NameBox>A1<Caret $color="#666" /></NameBox>
        <GripDots><Grip /></GripDots>
        <FxBox>
          <CrossIcon />
          <CheckIcon />
          <FxText>fx</FxText>
        </FxBox>
        <FormulaInput><ChevronIcon /></FormulaInput>
      </FormulaBar>

      <SheetArea>
        <Grid>
          <HeaderRow>
            <Corner><CornerTriangle /></Corner>
            {colNames.map((c, i) => (
              <ColHead key={c} $w={colWidth(i)} $sel={i === 0}>{c}</ColHead>
            ))}
          </HeaderRow>
          {rows.map((r) => (
            <DataRow key={r}>
              <RowHead $sel={r === 1}>{r}</RowHead>
              {colNames.map((c, i) => (
                <Cell key={c} $w={colWidth(i)} $active={r === 1 && i === 0} />
              ))}
            </DataRow>
          ))}
        </Grid>
        <VScroll>
          <ScrollButton><ArrowUp /></ScrollButton>
          <VThumb />
          <VTrack />
          <ScrollButton><ArrowDown /></ScrollButton>
        </VScroll>
      </SheetArea>

      <TabStrip>
        <NavArrows>
          <ArrowLeft />
          <ArrowRight />
        </NavArrows>
        <SheetTab $w={65}>Sheet1</SheetTab>
        <SheetTab $w={65} $active>Sheet2</SheetTab>
        <SheetTab $w={63}>Sheet3</SheetTab>
        <AddSheet><PlusCircleIcon /></AddSheet>
        <TabGrip />
        <HScroll>
          <HButton><ArrowLeft $color="#666" /></HButton>
          <HThumb />
          <HTrack />
          <HButton><ArrowRight $color="#666" /></HButton>
        </HScroll>
      </TabStrip>

      <StatusBar>
        <StatusText>Ready</StatusText>
        <ViewButton $w={38} $active><NormalViewIcon /></ViewButton>
        <ViewButton $w={37}><PageLayoutIcon /></ViewButton>
        <ViewButton $w={39}><PageBreakIcon /></ViewButton>
        <ZoomSign $w={15}>-</ZoomSign>
        <ZoomTrack><ZoomThumb /></ZoomTrack>
        <ZoomSign $w={16}>+</ZoomSign>
        <ZoomValue>100%</ZoomValue>
      </StatusBar>

      <Menu>
        <MenuItem><MenuIcon /><span><u>I</u>nsert...</span></MenuItem>
        <MenuItem><MenuIcon><DeleteSheetIcon /></MenuIcon><span><u>D</u>elete</span></MenuItem>
        <MenuItem><MenuIcon /><span><u>R</u>ename</span></MenuItem>
        <MenuItem><MenuIcon /><span><u>M</u>ove or Copy...</span></MenuItem>
        <MenuItem><MenuIcon><ViewCodeIcon /></MenuIcon><span><u>V</u>iew Code</span></MenuItem>
        <MenuItem><MenuIcon><ProtectIcon /></MenuIcon><span><u>P</u>rotect Sheet...</span></MenuItem>
        <MenuItem>
          <MenuIcon /><span><u>T</u>ab Color</span>
          <MenuSubArrow><ArrowRight $color="#666" /></MenuSubArrow>
        </MenuItem>
        <MenuSep $h={2} />
        <MenuItem><MenuIcon /><span><u>H</u>ide</span></MenuItem>
        <MenuItem $disabled><MenuIcon /><span><u>U</u>nhide...</span></MenuItem>
        <MenuSep $h={2} />
        <MenuItem><MenuIcon /><span><u>S</u>elect All Sheets</span></MenuItem>
      </Menu>
      <DropLine />
      <Pointer><PointerIcon /></Pointer>
    </Page>
  );
}
